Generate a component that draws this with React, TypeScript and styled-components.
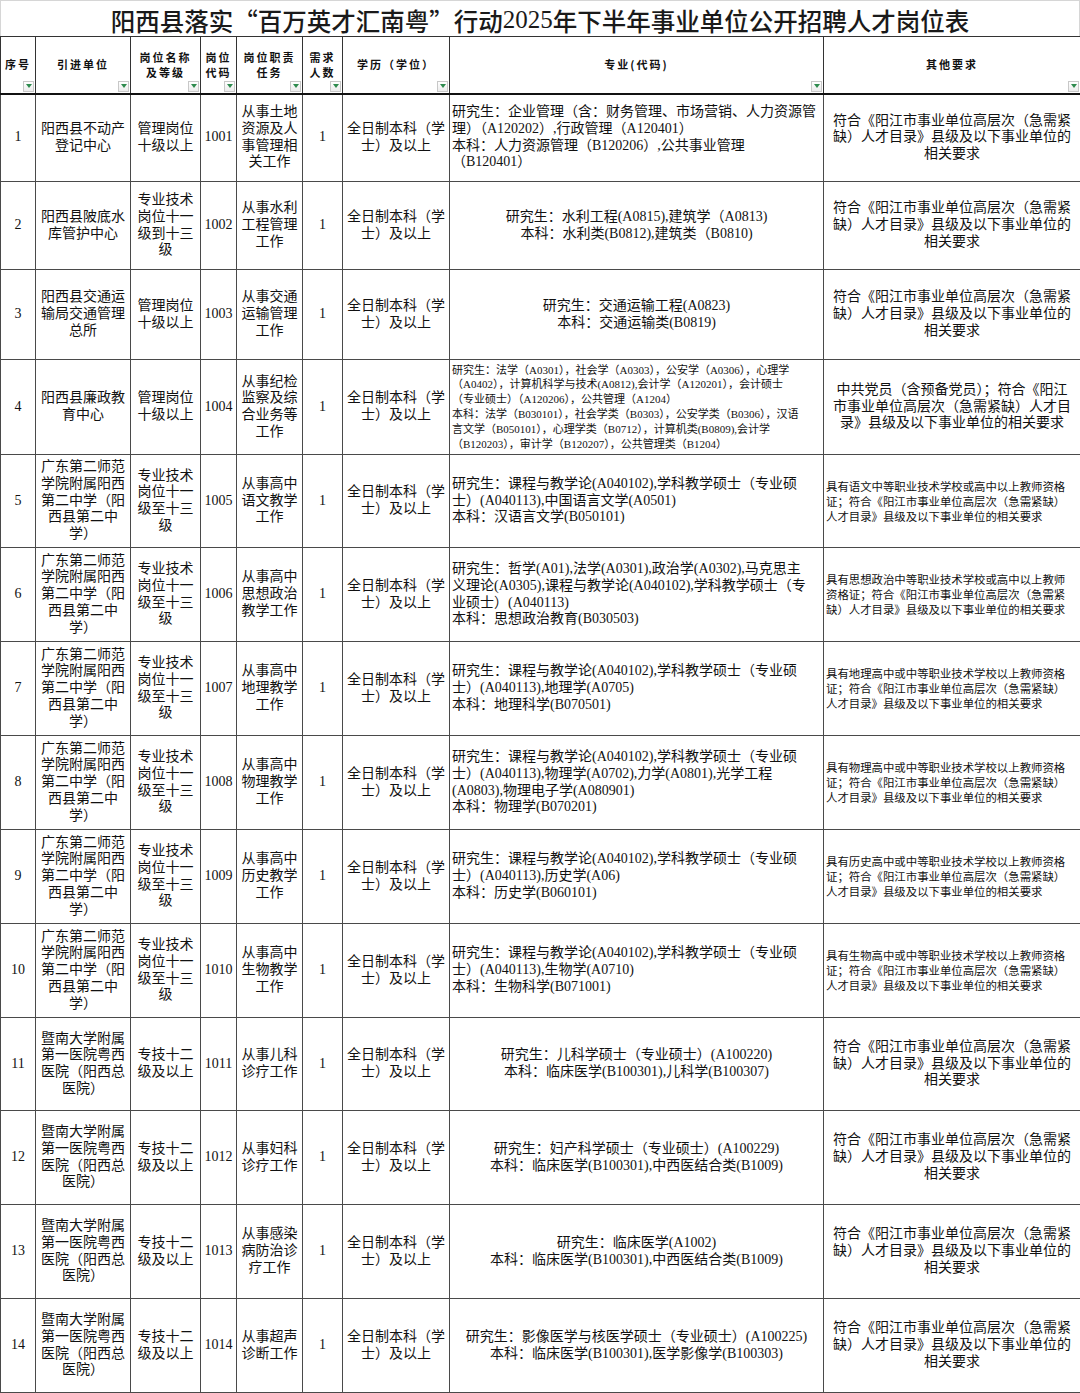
import React from "react";
import styled, { createGlobalStyle } from "styled-components";

const GlobalStyle = createGlobalStyle`
  html, body { margin: 0; padding: 0; background: #ffffff; }
  body { font-family: "Liberation Serif", "Noto Sans CJK SC", serif; color: #111; }
`;

const Page = styled.div`
  width: 1080px;
  background: #fff;
`;

const TitleBar = styled.div`
  height: 36px;
  box-sizing: border-box;
  border-top: 1px solid #d6d6d6;
  border-left: 1px solid #d6d6d6;
  border-right: 1px solid #d6d6d6;
  display: flex;
  align-items: center;
  justify-content: center;
  padding-top: 3px;
  font-family: "Noto Sans CJK SC", sans-serif;
  font-size: 24.5px;
  font-weight: 500;
  color: #1a1a1a;
  white-space: nowrap;
`;

const Num = styled.span`
  font-family: "Liberation Serif", serif;
  font-size: 25px;
`;

const Grid = styled.table`
  width: 1080px;
  border-collapse: collapse;
  table-layout: fixed;
`;

const Col = styled.col<{ $w: number }>`
  width: ${(p) => p.$w}px;
`;

const HeadRow = styled.tr`
  height: 57px;
`;

const HeadCell = styled.th`
  position: relative;
  border: 1px solid #333;
  border-bottom: 2px solid #111;
  padding: 0 2px;
  font-family: "Noto Sans CJK SC", sans-serif;
  font-size: 11px;
  font-weight: 700;
  letter-spacing: 2px;
  line-height: 15px;
  text-align: center;
  vertical-align: middle;
  white-space: pre-line;
  color: #111;
`;

const FilterButton = styled.span`
  position: absolute;
  right: 1px;
  bottom: 1px;
  width: 11px;
  height: 11px;
  box-sizing: border-box;
  border: 1px solid #c8c8c8;
  background: linear-gradient(#ffffff, #ececec);
  display: flex;
  align-items: center;
  justify-content: center;
  &::after {
    content: "";
    width: 0;
    height: 0;
    border-left: 3px solid transparent;
    border-right: 3px solid transparent;
    border-top: 4px solid #2e8b4e;
  }
`;

const BodyRow = styled.tr<{ $h: number }>`
  height: ${(p) => p.$h}px;
`;

const Cell = styled.td<{ $align?: "left" | "center"; $small?: boolean; $tiny?: boolean }>`
  border: 1px solid #4a4a4a;
  padding: 0 ${(p) => (p.$align === "left" ? "2px" : "1px")};
  font-size: ${(p) => (p.$tiny ? "11px" : p.$small ? "11.4px" : "14px")};
  line-height: ${(p) => (p.$tiny ? "14.8px" : p.$small ? "15px" : "16.7px")};
  font-family: ${(p) =>
    p.$small ? '"Noto Sans CJK SC", sans-serif' : '"Liberation Serif", "Noto Sans CJK SC", serif'};
  text-align: ${(p) => p.$align ?? "center"};
  vertical-align: middle;
  white-space: pre-line;
  color: #111;
  overflow: hidden;
`;

type RowData = {
  no: number;
  unit: string;
  post: string;
  code: string;
  duty: string;
  edu: string;
  major: string;
  majorAlign: "left" | "center";
  majorTiny?: boolean;
  other: string;
  otherSmall?: boolean;
  h: number;
};

const STD_OTHER = "符合《阳江市事业单位高层次（急需紧\n缺）人才目录》县级及以下事业单位的\n相关要求";
const EDU = "全日制本科（学\n士）及以上";
const SCHOOL = "广东第二师范\n学院附属阳西\n第二中学（阳\n西县第二中\n学）";
const TECH = "专业技术\n岗位十一\n级至十三\n级";
const HOSP = "暨南大学附属\n第一医院粤西\n医院（阳西总\n医院）";
const teach = (subj: string) =>
  `具有${subj}高中或中等职业技术学校以上教师资格\n证；符合《阳江市事业单位高层次（急需紧缺）\n人才目录》县级及以下事业单位的相关要求`;

const rows: RowData[] = [
  {
    no: 1, unit: "阳西县不动产\n登记中心", post: "管理岗位\n十级以上", code: "1001",
    duty: "从事土地\n资源及人\n事管理相\n关工作", edu: EDU,
    major: "研究生：企业管理（含：财务管理、市场营销、人力资源管\n理）（A120202）,行政管理（A120401）\n本科：人力资源管理（B120206）,公共事业管理\n（B120401）",
    majorAlign: "left", other: STD_OTHER, h: 88,
  },
  {
    no: 2, unit: "阳西县陂底水\n库管护中心", post: "专业技术\n岗位十一\n级到十三\n级", code: "1002",
    duty: "从事水利\n工程管理\n工作", edu: EDU,
    major: "研究生：水利工程(A0815),建筑学（A0813)\n本科：水利类(B0812),建筑类（B0810)",
    majorAlign: "center", other: STD_OTHER, h: 88,
  },
  {
    no: 3, unit: "阳西县交通运\n输局交通管理\n总所", post: "管理岗位\n十级以上", code: "1003",
    duty: "从事交通\n运输管理\n工作", edu: EDU,
    major: "研究生：交通运输工程(A0823)\n本科：交通运输类(B0819)",
    majorAlign: "center", other: STD_OTHER, h: 90,
  },
  {
    no: 4, unit: "阳西县廉政教\n育中心", post: "管理岗位\n十级以上", code: "1004",
    duty: "从事纪检\n监察及综\n合业务等\n工作", edu: EDU,
    major:
      "研究生：法学（A0301），社会学（A0303），公安学（A0306），心理学\n（A0402），计算机科学与技术(A0812),会计学（A120201），会计硕士\n（专业硕士）（A120206），公共管理（A1204）\n本科：法学（B030101），社会学类（B0303），公安学类（B0306），汉语\n言文学（B050101），心理学类（B0712），计算机类(B0809),会计学\n（B120203），审计学（B120207），公共管理类（B1204）",
    majorAlign: "left", majorTiny: true,
    other: "中共党员（含预备党员）；符合《阳江\n市事业单位高层次（急需紧缺）人才目\n录》县级及以下事业单位的相关要求", h: 95,
  },
  {
    no: 5, unit: SCHOOL, post: TECH, code: "1005", duty: "从事高中\n语文教学\n工作", edu: EDU,
    major: "研究生：课程与教学论(A040102),学科教学硕士（专业硕\n士）(A040113),中国语言文学(A0501)\n本科：汉语言文学(B050101)",
    majorAlign: "left",
    other: "具有语文中等职业技术学校或高中以上教师资格\n证；符合《阳江市事业单位高层次（急需紧缺）\n人才目录》县级及以下事业单位的相关要求",
    otherSmall: true, h: 93,
  },
  {
    no: 6, unit: SCHOOL, post: TECH, code: "1006", duty: "从事高中\n思想政治\n教学工作", edu: EDU,
    major: "研究生：哲学(A01),法学(A0301),政治学(A0302),马克思主\n义理论(A0305),课程与教学论(A040102),学科教学硕士（专\n业硕士）(A040113)\n本科：思想政治教育(B030503)",
    majorAlign: "left",
    other: "具有思想政治中等职业技术学校或高中以上教师\n资格证；符合《阳江市事业单位高层次（急需紧\n缺）人才目录》县级及以下事业单位的相关要求",
    otherSmall: true, h: 94,
  },
  {
    no: 7, unit: SCHOOL, post: TECH, code: "1007", duty: "从事高中\n地理教学\n工作", edu: EDU,
    major: "研究生：课程与教学论(A040102),学科教学硕士（专业硕\n士）(A040113),地理学(A0705)\n本科：地理科学(B070501)",
    majorAlign: "left", other: teach("地理"), otherSmall: true, h: 94,
  },
  {
    no: 8, unit: SCHOOL, post: TECH, code: "1008", duty: "从事高中\n物理教学\n工作", edu: EDU,
    major: "研究生：课程与教学论(A040102),学科教学硕士（专业硕\n士）(A040113),物理学(A0702),力学(A0801),光学工程\n(A0803),物理电子学(A080901)\n本科：物理学(B070201)",
    majorAlign: "left", other: teach("物理"), otherSmall: true, h: 94,
  },
  {
    no: 9, unit: SCHOOL, post: TECH, code: "1009", duty: "从事高中\n历史教学\n工作", edu: EDU,
    major: "研究生：课程与教学论(A040102),学科教学硕士（专业硕\n士）(A040113),历史学(A06)\n本科：历史学(B060101)",
    majorAlign: "left", other: teach("历史"), otherSmall: true, h: 94,
  },
  {
    no: 10, unit: SCHOOL, post: TECH, code: "1010", duty: "从事高中\n生物教学\n工作", edu: EDU,
    major: "研究生：课程与教学论(A040102),学科教学硕士（专业硕\n士）(A040113),生物学(A0710)\n本科：生物科学(B071001)",
    majorAlign: "left", other: teach("生物"), otherSmall: true, h: 94,
  },
  {
    no: 11, unit: HOSP, post: "专技十二\n级及以上", code: "1011", duty: "从事儿科\n诊疗工作", edu: EDU,
    major: "研究生：儿科学硕士（专业硕士）(A100220)\n本科：临床医学(B100301),儿科学(B100307)",
    majorAlign: "center", other: STD_OTHER, h: 93,
  },
  {
    no: 12, unit: HOSP, post: "专技十二\n级及以上", code: "1012", duty: "从事妇科\n诊疗工作", edu: EDU,
    major: "研究生：妇产科学硕士（专业硕士）(A100229)\n本科：临床医学(B100301),中西医结合类(B1009)",
    majorAlign: "center", other: STD_OTHER, h: 94,
  },
  {
    no: 13, unit: HOSP, post: "专技十二\n级及以上", code: "1013", duty: "从事感染\n病防治诊\n疗工作", edu: EDU,
    major: "研究生：临床医学(A1002)\n本科：临床医学(B100301),中西医结合类(B1009)",
    majorAlign: "center", other: STD_OTHER, h: 94,
  },
  {
    no: 14, unit: HOSP, post: "专技十二\n级及以上", code: "1014", duty: "从事超声\n诊断工作", edu: EDU,
    major: "研究生：影像医学与核医学硕士（专业硕士）(A100225)\n本科：临床医学(B100301),医学影像学(B100303)",
    majorAlign: "center", other: STD_OTHER, h: 94,
  },
];

const widths = [35, 95, 70, 36, 66, 40, 107, 374, 257];
const heads = [
  "序号",
  "引进单位",
  "岗位名称\n及等级",
  "岗位\n代码",
  "岗位职责\n任务",
  "需求\n人数",
  "学历（学位）",
  "专业(代码)",
  "其他要求",
];

export default function App() {
  return (
    <Page>
      <GlobalStyle />
      <TitleBar>
        阳西县落实“百万英才汇南粤”行动<Num>2025</Num>年下半年事业单位公开招聘人才岗位表
      </TitleBar>
      <Grid>
        <colgroup>
          {widths.map((w, i) => (
            <Col key={i} $w={w} />
          ))}
        </colgroup>
        <thead>
          <HeadRow>
            {heads.map((h) => (
              <HeadCell key={h}>
                {h}
                <FilterButton />
              </HeadCell>
            ))}
          </HeadRow>
        </thead>
        <tbody>
          {rows.map((r) => (
            <BodyRow key={r.no} $h={r.h}>
              <Cell>{r.no}</Cell>
              <Cell>{r.unit}</Cell>
              <Cell>{r.post}</Cell>
              <Cell>{r.code}</Cell>
              <Cell>{r.duty}</Cell>
              <Cell>1</Cell>
              <Cell>{r.edu}</Cell>
              <Cell $align={r.majorAlign} $tiny={r.majorTiny}>
                {r.major}
              </Cell>
              <Cell $align={r.otherSmall ? "left" : "center"} $small={r.otherSmall}>
                {r.other}
              </Cell>
            </BodyRow>
          ))}
        </tbody>
      </Grid>
    </Page>
  );
}
